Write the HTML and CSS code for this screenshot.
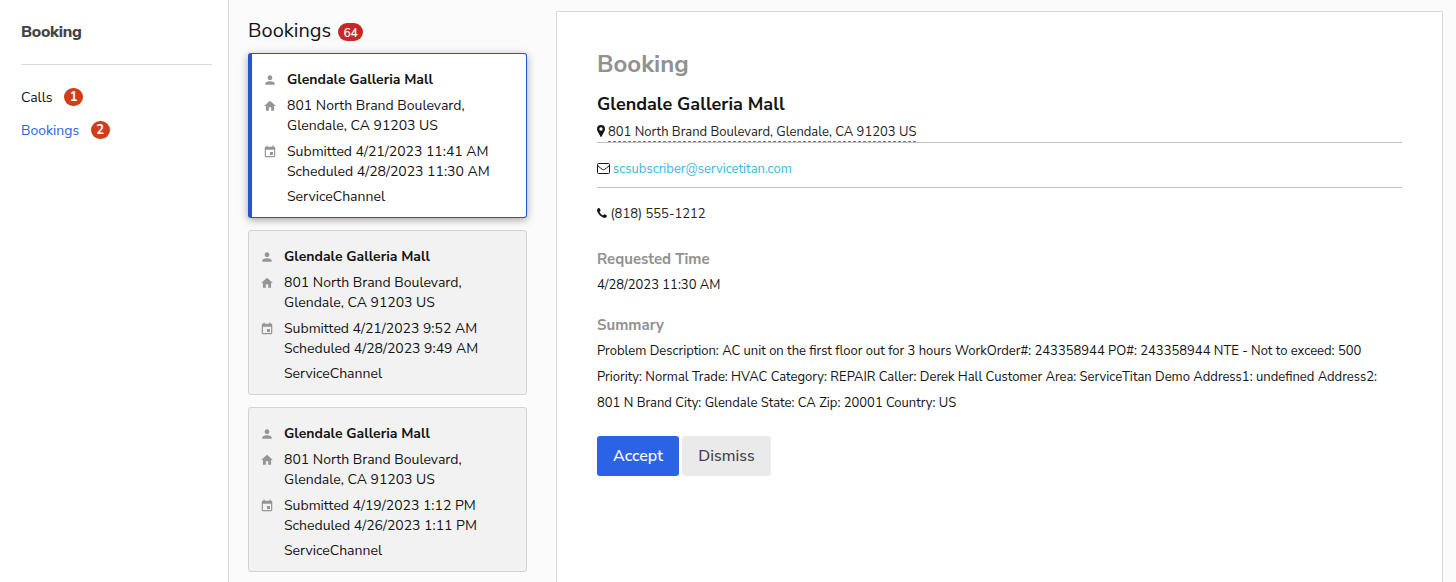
FILE: index.html
```html
<!DOCTYPE html>
<html lang="en">
<head>
    <meta charset="UTF-8">
    <meta name="viewport" content="width=device-width, initial-scale=1.0">
    <title>Bookings</title>
    <link rel="stylesheet" href="styles.css">
</head>
<body>
    <!-- Shared icons -->
    <svg class="sprite" xmlns="http://www.w3.org/2000/svg">
        <symbol id="person" viewBox="0 0 24 24">
            <path d="M12 12c2.21 0 4-1.79 4-4s-1.79-4-4-4-4 1.79-4 4 1.79 4 4 4zm0 2c-2.67 0-8 1.34-8 4v2h16v-2c0-2.66-5.33-4-8-4z"/>
        </symbol>
        <symbol id="home" viewBox="0 0 24 24">
            <path d="M10 20v-6h4v6h5v-8h3L12 3 2 12h3v8z"/>
        </symbol>
        <symbol id="event" viewBox="0 0 24 24">
            <path d="M17 12h-5v5h5v-5zM16 1v2H8V1H6v2H5c-1.11 0-1.99.9-1.99 2L3 19c0 1.1.89 2 2 2h14c1.1 0 2-.9 2-2V5c0-1.1-.9-2-2-2h-1V1h-2zm3 18H5V8h14v11z"/>
        </symbol>
    </svg>

    <aside class="sidebar">
        <h1>Booking</h1>
        <nav>
            <a href="#"><span>Calls</span><b class="count">1</b></a>
            <a href="#" class="active"><span>Bookings</span><b class="count">2</b></a>
        </nav>
    </aside>

    <section class="booking-list">
        <h2><span>Bookings</span> <span class="total">64</span></h2>

        <div class="card selected">
            <div class="row name"><svg><use href="#person"/></svg><p>Glendale Galleria Mall</p></div>
            <div class="row"><svg><use href="#home"/></svg><p>801 North Brand Boulevard,<br>Glendale, CA 91203 US</p></div>
            <div class="row"><svg><use href="#event"/></svg><p>Submitted 4/21/2023 11:41 AM<br>Scheduled 4/28/2023 11:30 AM</p></div>
            <div class="row source"><p>ServiceChannel</p></div>
        </div>

        <div class="card">
            <div class="row name"><svg><use href="#person"/></svg><p>Glendale Galleria Mall</p></div>
            <div class="row"><svg><use href="#home"/></svg><p>801 North Brand Boulevard,<br>Glendale, CA 91203 US</p></div>
            <div class="row"><svg><use href="#event"/></svg><p>Submitted 4/21/2023 9:52 AM<br>Scheduled 4/28/2023 9:49 AM</p></div>
            <div class="row source"><p>ServiceChannel</p></div>
        </div>

        <div class="card">
            <div class="row name"><svg><use href="#person"/></svg><p>Glendale Galleria Mall</p></div>
            <div class="row"><svg><use href="#home"/></svg><p>801 North Brand Boulevard,<br>Glendale, CA 91203 US</p></div>
            <div class="row"><svg><use href="#event"/></svg><p>Submitted 4/19/2023 1:12 PM<br>Scheduled 4/26/2023 1:11 PM</p></div>
            <div class="row source"><p>ServiceChannel</p></div>
        </div>
    </section>

    <main class="detail">
        <h2>Booking</h2>
        <h3>Glendale Galleria Mall</h3>
        <div class="contact address">
            <svg class="pin" viewBox="0 0 8 12"><path fill-rule="evenodd" d="M4 0a4 4 0 0 1 4 4c0 1-.3 1.700-.7 2.500L4.600 11.600a.7.7 0 0 1-1.200 0L.7 6.500C.3 5.700 0 5 0 4a4 4 0 0 1 4-4zm0 2.300a1.700 1.700 0 1 0 0 3.400 1.700 1.700 0 0 0 0-3.400z"/></svg>
            <span>801 North Brand Boulevard, Glendale, CA 91203 US</span>
        </div>
        <div class="contact email">
            <svg class="envelope" viewBox="0 0 13 11"><rect x=".5" y=".5" width="12" height="10" rx="1"/><path d="M.7 2.600C2.500 4.300 4 5.300 5.200 6.300q1.300 1 2.600 0C9 5.300 10.500 4.300 12.300 2.600"/></svg>
            <a href="#">scsubscriber@servicetitan.com</a>
        </div>
        <div class="contact phone">
            <svg class="handset" viewBox="0 0 10 10"><path d="M.3 1.200C.6.5 1.500.1 2.200.1c.3 0 .5.5.7.9l.7 1.300c.4.7-1 1.200-1 1.700 0 .7 2.600 3.300 3.300 3.300.5 0 1-1.400 1.700-1l1.300.7c.4.2 1 .4 1 .7 0 .7-.4 1.600-1.100 1.900-.8.4-1.700.4-2.600 0C3.600 8.600 1.400 6.400.4 3.800 0 2.900-.1 2 .3 1.200z"/></svg>
            <span>(818) 555-1212</span>
        </div>

        <h4 class="requested">Requested Time</h4>
        <p class="time">4/28/2023 11:30 AM</p>

        <h4 class="summary-title">Summary</h4>
        <p class="summary">
            Problem Description: AC unit on the first floor out for 3 hours WorkOrder#: 243358944 PO#: 243358944 NTE - Not to exceed: 500<br>
            Priority: Normal Trade: HVAC Category: REPAIR Caller: Derek Hall Customer Area: ServiceTitan Demo Address1: undefined Address2:<br>
            801 N Brand City: Glendale State: CA Zip: 20001 Country: US
        </p>

        <div class="actions">
            <button class="accept">Accept</button>
            <button class="dismiss">Dismiss</button>
        </div>
    </main>
</body>
</html>
```

FILE: styles.css
```css
* {
    margin: 0;
    padding: 0;
    box-sizing: border-box;
}

body {
    display: flex;
    height: 100vh;
    overflow: hidden;
    background-color: #fbfbfb;
    color: #141414;
    font-family: 'Nunito Sans', Nunito, Lato, sans-serif;
    font-size: 14px;
    line-height: 20px;
    white-space: nowrap;
}

a {
    color: inherit;
    text-decoration: none;
}

.sprite {
    display: none;
}

/* Sidebar */
.sidebar {
    width: 229px;
    flex-shrink: 0;
    padding: 20px 16px 0 21px;
    background-color: #fff;
    border-right: 1px solid #d9d9d9;
}

.sidebar h1 {
    height: 45px;
    border-bottom: 1px solid #d9d9d9;
    color: #434343;
    font-size: 16px;
    font-weight: 800;
    line-height: 24px;
    letter-spacing: -0.3px;
}

.sidebar nav {
    display: flex;
    flex-direction: column;
    padding-top: 16px;
}

.sidebar nav a {
    display: flex;
    align-items: center;
    height: 33px;
    gap: 11.5px;
}

.sidebar nav a.active {
    color: #2c63e6;
}

.count {
    width: 19px;
    height: 18px;
    margin-bottom: 1px;
    border-radius: 9px;
    background-color: #d13d1b;
    color: #fff;
    font-size: 13px;
    line-height: 18px;
    text-align: center;
}

/* Booking list */
.booking-list {
    width: 279px;
    flex-shrink: 0;
    margin-left: 19px;
    padding-top: 16px;
}

.booking-list h2 {
    display: flex;
    align-items: center;
    gap: 7px;
    height: 29px;
    margin-bottom: 8px;
    font-size: 20px;
    font-weight: 400;
}

.total {
    width: 25px;
    height: 18px;
    margin-top: 3px;
    border-radius: 9px;
    background-color: #c62828;
    color: #fff;
    font-size: 12px;
    font-weight: 600;
    line-height: 20px;
    text-align: center;
}

.card {
    height: 165px;
    margin-bottom: 12px;
    padding: 16px 11px 0;
    background-color: #f2f2f2;
    border: 1px solid #d3d3d3;
    border-radius: 3px;
}

.card.selected {
    background-color: #fff;
    border-color: #2255d0;
    border-left-width: 4px;
    box-shadow: 0 2px 8px rgba(0, 0, 0, 0.35);
}

.row {
    display: flex;
    gap: 10px;
    margin-bottom: 6px;
}

.row svg {
    width: 14px;
    height: 14px;
    margin-top: 3px;
    fill: #959595;
}

.row.name {
    font-weight: 700;
}

.row.source {
    margin-top: -1px;
    padding-left: 24px;
}

/* Booking detail */
.detail {
    flex: 1;
    margin: 11px 13px 0 29px;
    padding: 36px 40px 0;
    background-color: #fff;
    border: 1px solid #d9d9d9;
    border-bottom: none;
    font-size: 13px;
}

.detail h2 {
    color: #919191;
    font-size: 24px;
    line-height: 32px;
}

.detail h3 {
    margin-top: 12px;
    font-size: 18px;
    line-height: 24px;
}

.contact {
    display: flex;
    align-items: center;
    gap: 3px;
    color: #242424;
}

.contact svg {
    fill: #141414;
}

.address {
    height: 27px;
    border-bottom: 1px solid #c2c2c2;
}

.address span {
    height: 20px;
    margin-top: 5px;
    border-bottom: 1px dashed #777;
    line-height: 20px;
}

.contact .pin {
    width: 8px;
    height: 12px;
    margin-top: 4px;
}

.email {
    height: 45px;
    padding-top: 7px;
    border-bottom: 1px solid #c2c2c2;
}

.email a {
    color: #36b9df;
}

.contact .envelope {
    width: 13px;
    height: 11px;
    fill: none;
    stroke: #141414;
}

.phone {
    height: 44px;
    padding-top: 7px;
}

.contact .handset {
    width: 10px;
    height: 10px;
    margin: -1px 0.5px 0 0;
}

.detail h4 {
    color: #919191;
    font-size: 15px;
}

.requested {
    margin-top: 17px;
}

.time {
    margin-top: 6px;
}

.summary-title {
    margin-top: 20px;
}

.summary {
    margin-top: 3px;
    line-height: 26px;
}

.actions {
    display: flex;
    gap: 3px;
    margin-top: 20px;
}

.actions button {
    height: 40px;
    border: none;
    border-radius: 3px;
    font-family: inherit;
    font-size: 16px;
    font-weight: 500;
    cursor: pointer;
}

.actions .accept {
    width: 82px;
    background-color: #2c63e6;
    color: #fff;
}

.actions .dismiss {
    width: 89px;
    background-color: #eaeaea;
    color: #444;
}
```
